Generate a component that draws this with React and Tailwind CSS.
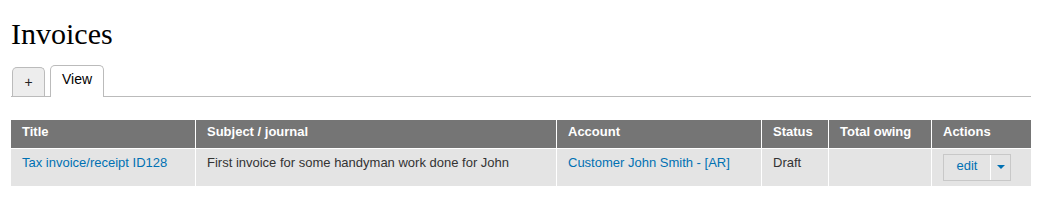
const COLS = [
  { label: 'Title', w: 'w-[185px]' },
  { label: 'Subject / journal', w: 'w-[361px]' },
  { label: 'Account', w: 'w-[205px]' },
  { label: 'Status', w: 'w-[67px]' },
  { label: 'Total owing', w: 'w-[103px]' },
  { label: 'Actions', w: 'w-[99px]' },
]

function Caret() {
  return (
    <svg width="8" height="4" viewBox="0 0 8 4" className="block">
      <path d="M0 0h8L4 4z" fill="#0071b3" />
    </svg>
  )
}

function EditButton() {
  return (
    <div className="inline-flex h-[27px] border border-[#c8c8c8] bg-[#e4e4e4]">
      <a href="#" className="w-[47px] flex items-center justify-center pb-[4px] leading-[17px] text-[#0071b3] border-r border-white">
        edit
      </a>
      <button className="w-[19px] flex items-center justify-center pb-[2px]">
        <Caret />
      </button>
    </div>
  )
}

export default function App() {
  return (
    <div className="w-[1054px] min-h-[204px] bg-white px-[11px] pt-[16px] font-['Liberation_Sans',Arial,sans-serif] text-[13px] text-[#333]">
      <h1 className="font-['Liberation_Serif','Times_New_Roman',serif] text-[30px] leading-[36px] font-normal text-black">
        Invoices
      </h1>

      {/* Tabs */}
      <div className="mt-[13px] w-[1020px] flex items-end gap-[5px] pl-px border-b border-[#bbb] text-[14px] leading-[16px]">
        <a href="#" className="w-[33px] h-[29px] pt-[6px] text-center text-[#222] bg-[#ededed] border border-b-0 border-[#bbb] rounded-t-[5px]">
          +
        </a>
        <a href="#" className="w-[54px] h-[32px] -mb-px pt-[5px] text-center text-black bg-white border border-b-0 border-[#bbb] rounded-t-[5px]">
          View
        </a>
      </div>

      {/* Table */}
      <div className="mt-[23px] w-[1020px]">
        <div className="flex">
          {COLS.map((c, i) => (
            <div
              key={c.label}
              className={`${c.w} shrink-0 bg-[#757575] text-white font-bold leading-[17px] pl-[11px] pt-[3px] pb-[8px] border-b border-white ${i < COLS.length - 1 ? 'border-r' : ''}`}
            >
              {c.label}
            </div>
          ))}
        </div>
        <div className="flex bg-[#e4e4e4] leading-[17px]">
          <div className="w-[185px] shrink-0 pl-[11px] pt-[5px] border-r border-white">
            <a href="#" className="text-[#0071b3]">Tax invoice/receipt ID128</a>
          </div>
          <div className="w-[361px] shrink-0 pl-[11px] pt-[5px] border-r border-white">
            First invoice for some handyman work done for John
          </div>
          <div className="w-[205px] shrink-0 pl-[11px] pt-[5px] border-r border-white">
            <a href="#" className="text-[#0071b3]">Customer John Smith</a>
            <span className="text-[#0071b3]"> - [AR]</span>
          </div>
          <div className="w-[67px] shrink-0 pl-[11px] pt-[5px] border-r border-white">Draft</div>
          <div className="w-[103px] shrink-0 pl-[11px] pt-[5px] border-r border-white"></div>
          <div className="w-[99px] shrink-0 pl-[11px] pt-[5px] pb-[5px]">
            <EditButton />
          </div>
        </div>
      </div>
    </div>
  )
}
